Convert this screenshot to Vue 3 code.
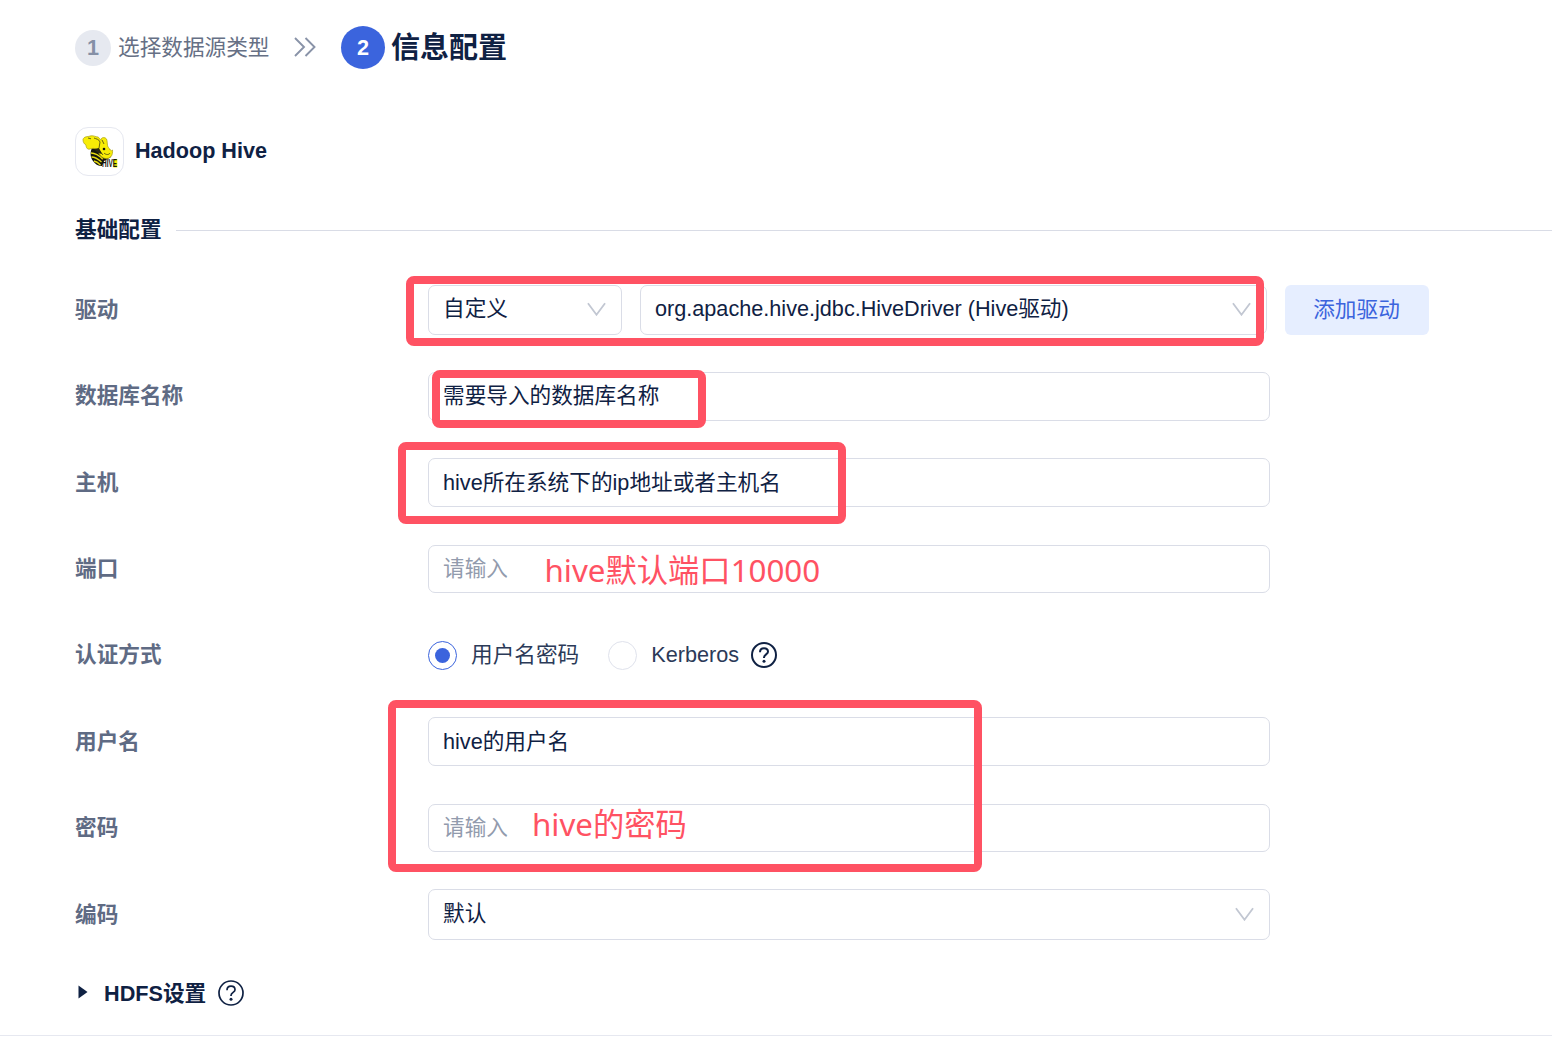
<script setup>
const chevron = 'M1 1 L10 13 L19 1'
</script>

<template>
  <main class="page">
    <header class="steps">
      <span class="num num-idle">1</span>
      <span class="step-idle">选择数据源类型</span>
      <svg class="arrows" viewBox="0 0 22 20" width="22" height="20">
        <path d="M1 1 L10 10 L1 19 M11.500 1 L20.500 10 L11.500 19" />
      </svg>
      <span class="num num-active">2</span>
      <h1 class="step-active">信息配置</h1>
    </header>

    <section class="source">
      <span class="logo">
        <svg viewBox="0 0 40 40" width="40" height="40">
          <path class="bee-body" d="M10 13 C8 17 8 22 11 26 C13 29 16 31 20 31 L22 26 L29 22 L28 14 Z" />
          <path class="bee-stripe" d="M9 18 Q15 18 21 24.500 M9.500 22 Q14 22 19.500 27 M12 26 Q15 26.500 18.500 30" />
          <path class="bee-wing" d="M1 4.500 C2 1 6 2 8 1 C11 0 14 2 16 2 C18 3 18 5 19 5 C19 2 23 2 24.500 4 C25.500 6 25 10 26 12 C28 14 29 17 30.500 15 C31 20 29 23 25 23.500 C21 24 17 20 16 16 C14 13 11 13 8 14 C5 15 4 12 4 10 C2 9 1 7 1 4.500 Z" />
          <path class="bee-line" d="M6 3 L9 3.800 M12 3 C14 4 17 4 18 7 L17 13 M20 5 L22 9 M17 15 L21 20 M22 18 C24 20 27 20 28 18" />
          <path class="bee-shade" d="M12 14 L17 13 L20 19 L16 18 Z" />
          <circle cx="22" cy="14" r="1.300" fill="#16170e" />
          <rect x="31.300" y="24" width="4" height="8.500" fill="#f8ef08" />
          <text class="logo-word" x="20" y="31.700" textLength="15" lengthAdjust="spacingAndGlyphs">HIVE</text>
        </svg>
      </span>
      <h2 class="source-name">Hadoop Hive</h2>
    </section>

    <div class="section-head">
      <h3>基础配置</h3>
      <i class="rule"></i>
    </div>

    <section class="form">
      <div class="row h87">
        <label class="label lower">驱动</label>
        <div class="control tall driver">
          <div class="field kind">
            <span>自定义</span>
            <svg class="chevron" viewBox="0 0 20 14" width="19" height="14"><path :d="chevron" /></svg>
          </div>
          <div class="field class-name">
            <span>org.apache.hive.jdbc.HiveDriver (Hive驱动)</span>
            <svg class="chevron" viewBox="0 0 20 14" width="19" height="14"><path :d="chevron" /></svg>
          </div>
          <button class="add">添加驱动</button>
        </div>
      </div>

      <div class="row h86">
        <label class="label">数据库名称</label>
        <div class="control"><div class="field database">需要导入的数据库名称</div></div>
      </div>

      <div class="row h87">
        <label class="label lower">主机</label>
        <div class="control"><div class="field">hive所在系统下的ip地址或者主机名</div></div>
      </div>

      <div class="row h86">
        <label class="label">端口</label>
        <div class="control short"><div class="field empty">请输入</div></div>
      </div>

      <div class="row h86">
        <label class="label">认证方式</label>
        <div class="control auth">
          <span class="radio checked"></span>
          <span class="radio-text first">用户名密码</span>
          <span class="radio"></span>
          <span class="radio-text">Kerberos</span>
          <svg class="help" viewBox="0 0 26 26" width="26" height="26">
            <circle cx="13" cy="13" r="12" />
            <path d="M9 10.200 C9 7.700 10.700 6.200 13 6.200 C15.400 6.200 17 7.700 17 9.700 C17 12.300 13 12.500 13 15.500 V16" />
            <circle class="dot" cx="13" cy="19.300" r="1.500" />
          </svg>
        </div>
      </div>

      <div class="row h87">
        <label class="label lower">用户名</label>
        <div class="control"><div class="field">hive的用户名</div></div>
      </div>

      <div class="row h85">
        <label class="label">密码</label>
        <div class="control short"><div class="field empty">请输入</div></div>
      </div>

      <div class="row h87">
        <label class="label lowest">编码</label>
        <div class="control encoding">
          <div class="field">
            <span>默认</span>
            <svg class="chevron" viewBox="0 0 20 14" width="19" height="14"><path :d="chevron" /></svg>
          </div>
        </div>
      </div>
    </section>

    <footer class="hdfs">
      <svg class="caret" viewBox="0 0 10 14" width="10" height="14"><path d="M0.500 0.500 L9.500 7 L0.500 13.500 Z" /></svg>
      <strong>HDFS设置</strong>
      <svg class="help thin" viewBox="0 0 26 26" width="26" height="26">
        <circle cx="13" cy="13" r="12" />
        <path d="M9 10.200 C9 7.700 10.700 6.200 13 6.200 C15.400 6.200 17 7.700 17 9.700 C17 12.300 13 12.500 13 15.500 V16" />
        <circle class="dot" cx="13" cy="19.300" r="1.500" />
      </svg>
    </footer>

    <!-- annotation layer over the form -->
    <div class="mark mark-driver"></div>
    <div class="mark mark-database"></div>
    <div class="mark mark-host"></div>
    <div class="mark mark-account"></div>
    <div class="note note-port">hive默认端口10000</div>
    <div class="note note-password">hive的密码</div>
  </main>
</template>

<style>
body {
  background: #fff;
  overflow: hidden;
}
</style>

<style scoped>
.page {
  position: relative;
  box-sizing: border-box;
  width: 1552px;
  height: 1040px;
  padding-left: 75px;
  overflow: hidden;
  background: #fff;
  color: #0f2143;
  font: 21.65px/30px "Liberation Sans", "Noto Sans CJK SC", sans-serif;
  white-space: nowrap;
}
h1, h2, h3 {
  margin: 0;
}
.steps {
  display: flex;
  align-items: center;
  height: 95px;
}
.num {
  display: flex;
  align-items: center;
  justify-content: center;
  border-radius: 50%;
  font-weight: 700;
}
.num-idle {
  width: 36px;
  height: 36px;
  background: #e6e9f0;
  color: #8590a6;
}
.step-idle {
  width: 152px;
  margin-left: 7px;
  color: #667085;
}
.arrows {
  margin: -2px 0 0 24px;
  fill: none;
  stroke: #8993a8;
  stroke-width: 1.9;
}
.num-active {
  width: 44px;
  height: 43px;
  margin-left: 25px;
  background: #3b64dd;
  color: #fff;
}
.step-active {
  margin-left: 6px;
  font-size: 29px;
  line-height: 40px;
}
.source {
  display: flex;
  align-items: center;
  height: 49px;
  margin-top: 32px;
}
.logo {
  box-sizing: border-box;
  display: flex;
  width: 49px;
  height: 49px;
  padding: 7px 0 0 6px;
  border: 1px solid #e6e8f0;
  border-radius: 13px;
}
.bee-body { fill: #15160c; }
.bee-stripe { fill: none; stroke: #e8dc10; stroke-width: 1.3; }
.bee-wing { fill: #f8ed06; stroke: #a89f12; stroke-width: 0.7; }
.bee-line { fill: none; stroke: #454114; stroke-width: 0.8; }
.bee-shade { fill: #2a280f; }
.logo-word {
  font: 700 10px/10px "Liberation Sans", sans-serif;
  fill: #15150b;
}
.source-name {
  margin: -1px 0 0 11px;
  font-size: 21.6px;
}
.section-head {
  display: flex;
  align-items: center;
  height: 30px;
  margin-top: 39px;
}
.section-head h3 {
  width: 86px;
  font-size: 21.65px;
}
.rule {
  flex: 1;
  height: 1px;
  margin: 1px 0 0 15px;
  background: #d9dce6;
}
.form {
  margin-top: 22px;
}
.row {
  box-sizing: border-box;
  display: flex;
  align-items: flex-start;
  padding-top: 18px;
}
.h85 { height: 85px; }
.h86 { height: 86px; }
.h87 { height: 87px; }
.label {
  width: 353px;
  padding-top: 9px;
  color: #5f6b84;
  font-weight: 700;
}
.label.lower { padding-top: 10px; }
.label.lowest { padding-top: 11px; }
.control {
  display: flex;
  width: 842px;
  height: 49px;
}
.control.tall {
  width: 1001px;
  height: 50px;
}
.control.short { height: 48px; }
.control.encoding { height: 51px; }
.field {
  box-sizing: border-box;
  flex: 1;
  display: flex;
  align-items: center;
  justify-content: space-between;
  padding: 0 15px 0 14px;
  border: 1px solid #dadde7;
  border-radius: 7px;
}
.tall .field,
.encoding .field,
.field.database { padding-bottom: 2px; }
.field.empty { color: #929bad; }
.tall .kind {
  flex: none;
  width: 194px;
}
.tall .class-name {
  flex: none;
  width: 627px;
  margin-left: 18px;
}
.chevron {
  margin-top: 1px;
  fill: none;
  stroke: #c2c7d2;
  stroke-width: 1.9;
}
.tall .chevron { margin-top: 0; }
.add {
  width: 144px;
  height: 50px;
  margin-left: 18px;
  padding: 0 1px 0 0;
  border: 0;
  border-radius: 6px;
  background: #e6eeff;
  color: #3b64dd;
  font: inherit;
}
.auth {
  align-items: center;
  color: #2b3a58;
}
.radio {
  box-sizing: border-box;
  display: flex;
  align-items: center;
  justify-content: center;
  width: 29px;
  height: 29px;
  border: 1px solid #dfe2ec;
  border-radius: 50%;
}
.radio.checked { border-color: #3b64dd; }
.radio.checked::after {
  content: "";
  width: 15px;
  height: 15px;
  border-radius: 50%;
  background: #3b64dd;
}
.radio-text {
  margin: -2px 0 0 14px;
}
.radio-text.first { margin-right: 29px; }
.help {
  margin-left: 12px;
  fill: none;
  stroke: #0f2143;
  stroke-width: 2;
}
.auth .help { margin-top: -2px; }
.help.thin { stroke-width: 1.7; }
.help .dot {
  fill: #0f2143;
  stroke: none;
}
.hdfs {
  display: flex;
  align-items: center;
  height: 84px;
  margin: -7px 0 0 -75px;
  padding-left: 78px;
  border-bottom: 1px solid #e6e8f0;
}
.hdfs strong { padding-top: 1px; }
.caret {
  margin: -2px 16px 0 0;
  fill: #0f2143;
}
.mark {
  position: absolute;
  box-sizing: border-box;
  border: 8px solid #ff5263;
  border-radius: 8px;
}
.mark-driver { left: 406px; top: 276px; width: 858px; height: 70px; }
.mark-database { left: 432px; top: 370px; width: 274px; height: 58px; }
.mark-host { left: 398px; top: 442px; width: 448px; height: 82px; }
.mark-account { left: 388px; top: 700px; width: 594px; height: 172px; }
.note {
  position: absolute;
  color: #ff5263;
  font: 31.3px/40px "Noto Sans", "Noto Sans CJK SC", sans-serif;
}
.note-port { left: 544.5px; top: 550px; }
.note-password { left: 532px; top: 804px; }
</style>
